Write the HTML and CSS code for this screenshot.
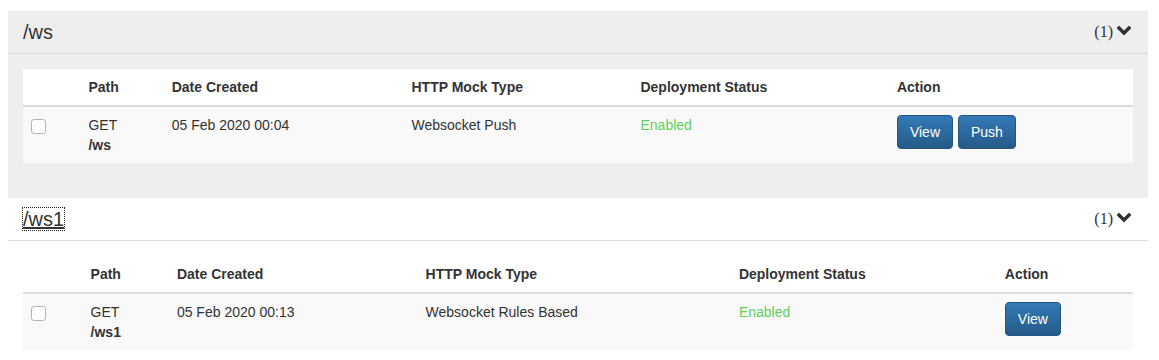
FILE: index.html
```html
<!DOCTYPE html>
<html lang="en">
<head>
  <meta charset="UTF-8" />
  <title>Mocks</title>
  <link rel="stylesheet" href="styles.css">
</head>
<body>
  <div class="mock-group open">
    <div class="group-heading">
      <span class="group-title">/ws</span>
      <span class="group-count">(1)
        <svg class="chevron" width="14" height="10" viewBox="0 0 14 10"><polyline points="2,2 7,7 12,2" fill="none" stroke="#333" stroke-width="3.4" stroke-linecap="square"/></svg>
      </span>
    </div>
    <div class="group-body">
      <table class="mock-table">
        <thead>
          <tr>
            <th class="col-check"></th>
            <th>Path</th>
            <th>Date Created</th>
            <th>HTTP Mock Type</th>
            <th>Deployment Status</th>
            <th>Action</th>
          </tr>
        </thead>
        <tbody>
          <tr>
            <td class="col-check"><input type="checkbox"></td>
            <td>GET<br><b>/ws</b></td>
            <td>05 Feb 2020 00:04</td>
            <td>Websocket Push</td>
            <td class="enabled">Enabled</td>
            <td><button class="btn">View</button> <button class="btn">Push</button></td>
          </tr>
        </tbody>
      </table>
    </div>
  </div>

  <div class="mock-group">
    <div class="group-heading">
      <a href="#" class="group-title link focused">/ws1</a>
      <span class="group-count">(1)
        <svg class="chevron" width="14" height="10" viewBox="0 0 14 10"><polyline points="2,2 7,7 12,2" fill="none" stroke="#333" stroke-width="3.4" stroke-linecap="square"/></svg>
      </span>
    </div>
    <div class="group-body">
      <table class="mock-table">
        <thead>
          <tr>
            <th class="col-check"></th>
            <th>Path</th>
            <th>Date Created</th>
            <th>HTTP Mock Type</th>
            <th>Deployment Status</th>
            <th>Action</th>
          </tr>
        </thead>
        <tbody>
          <tr>
            <td class="col-check"><input type="checkbox"></td>
            <td>GET<br><b>/ws1</b></td>
            <td>05 Feb 2020 00:13</td>
            <td>Websocket Rules Based</td>
            <td class="enabled">Enabled</td>
            <td><button class="btn">View</button></td>
          </tr>
        </tbody>
      </table>
    </div>
  </div>
</body>
</html>
```

FILE: styles.css
```css
body {
  margin: 0;
  padding: 11px 11px 0 8px;
  font-family: "Liberation Sans", Arial, sans-serif;
  font-size: 14px;
  line-height: 20px;
  color: #333;
  background: #fff;
}
.mock-group {
  background: #fff;
}
.mock-group.open {
  background: #eee;
}
.group-heading {
  display: flex;
  justify-content: space-between;
  align-items: center;
  padding: 10px 15px;
  border-bottom: 1px solid #ddd;
}
.group-title {
  font-size: 20px;
  line-height: 22px;
  color: #333;
}
.group-title.link {
  text-decoration: underline;
}
.group-title.focused {
  outline: 1px dotted #222;
}
.group-count {
  font-family: "Liberation Serif", "Times New Roman", serif;
  font-size: 16px;
  display: flex;
  align-items: center;
  gap: 4px;
  margin-right: 2px;
}
.chevron {
  margin-top: -3px;
}
.group-body {
  padding: 15px;
}
.mock-table {
  width: 100%;
  border-collapse: collapse;
  margin-bottom: 20px;
}
.mock-table th,
.mock-table td {
  text-align: left;
  vertical-align: top;
  padding: 8px;
}
.mock-table thead tr {
  background: #fff;
}
.mock-table th {
  border-bottom: 2px solid #ddd;
  font-weight: bold;
}
.mock-table tbody tr {
  background: #f9f9f9;
}
.mock-table input[type="checkbox"] {
  appearance: none;
  width: 15px;
  height: 15px;
  margin: 4px 1px 0 0;
  border: 1px solid #b5b5b5;
  border-radius: 3px;
  background: #fff;
  display: block;
}
.enabled {
  color: #5cd15c;
}
.btn {
  font-family: "Liberation Sans", Arial, sans-serif;
  font-size: 14px;
  line-height: 20px;
  padding: 6px 12px;
  color: #fff;
  background: linear-gradient(#337ab7, #265a88);
  border: 1px solid #245580;
  border-radius: 4px;
  cursor: pointer;
  margin-right: 1px;
}
```
